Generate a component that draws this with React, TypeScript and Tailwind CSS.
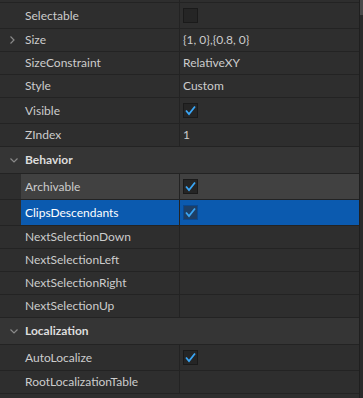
import type { ReactNode } from 'react'

type Row =
  | { kind: 'prop'; name: string; value?: string; check?: boolean; box?: boolean; expand?: boolean; state?: 'hover' | 'selected' }
  | { kind: 'head'; name: string }

const rows: Row[] = [
  { kind: 'prop', name: 'Selectable', box: true, check: false },
  { kind: 'prop', name: 'Size', value: '{1, 0},{0.8, 0}', expand: true },
  { kind: 'prop', name: 'SizeConstraint', value: 'RelativeXY' },
  { kind: 'prop', name: 'Style', value: 'Custom' },
  { kind: 'prop', name: 'Visible', box: true, check: true },
  { kind: 'prop', name: 'ZIndex', value: '1' },
  { kind: 'head', name: 'Behavior' },
  { kind: 'prop', name: 'Archivable', box: true, check: true, state: 'hover' },
  { kind: 'prop', name: 'ClipsDescendants', box: true, check: true, state: 'selected' },
  { kind: 'prop', name: 'NextSelectionDown' },
  { kind: 'prop', name: 'NextSelectionLeft' },
  { kind: 'prop', name: 'NextSelectionRight' },
  { kind: 'prop', name: 'NextSelectionUp' },
  { kind: 'head', name: 'Localization' },
  { kind: 'prop', name: 'AutoLocalize', box: true, check: true },
  { kind: 'prop', name: 'RootLocalizationTable' },
]

function Chevron({ down }: { down?: boolean }) {
  return (
    <svg width="10" height="10" viewBox="0 0 10 10" className="text-[#8a8a8a]">
      {down ? (
        <path d="M1.5 3.5 L5 7 L8.5 3.5" fill="none" stroke="currentColor" strokeWidth="1.2" />
      ) : (
        <path d="M3.5 1.5 L7 5 L3.5 8.5" fill="none" stroke="currentColor" strokeWidth="1.2" />
      )}
    </svg>
  )
}

function CheckBox({ checked, selected }: { checked?: boolean; selected?: boolean }) {
  return (
    <div
      className={`flex h-[15px] w-[15px] items-center justify-center border ${
        selected ? 'border-[#0a4890] bg-[#1d3f66]' : 'border-[#1a1a1a] bg-[#252525]'
      }`}
    >
      {checked && (
        <svg width="13" height="13" viewBox="0 0 13 13">
          <path d="M2 6.5 L5 10 L11 2.5" fill="none" stroke="#3aa6f5" strokeWidth="1.8" />
        </svg>
      )}
    </div>
  )
}

function Cell({ children, className = '' }: { children?: ReactNode; className?: string }) {
  return <div className={`flex items-center ${className}`}>{children}</div>
}

export default function App() {
  return (
    <div
      className="flex h-[398px] w-[363px] overflow-hidden bg-[#2e2e2e] text-[12px] text-[#cccccc]"
      style={{ fontFamily: 'Lato, "Open Sans", sans-serif' }}
    >
      <div className="flex flex-1 flex-col">
        <div className="flex h-[3px] shrink-0 border-b border-[#232323]">
          <div className="w-[180px] border-r border-[#232323]" />
        </div>
        {rows.map((r) =>
          r.kind === 'head' ? (
            <div
              key={r.name}
              className="flex h-[27px] shrink-0 items-center border-b border-[#232323] bg-[#353535]"
            >
              <div className="flex w-[25px] justify-center pl-[2px]">
                <Chevron down />
              </div>
              <span className="font-bold text-[#dddddd]">{r.name}</span>
            </div>
          ) : (
            <div
              key={r.name}
              className={`flex shrink-0 border-b border-[#232323] ${r.box ? 'h-[26px]' : 'h-[23px]'}`}
            >
              <div className="flex w-[21px] items-center justify-center pl-[2px]">
                {r.expand && <Chevron />}
              </div>
              <div
                className={`flex flex-1 ${
                  r.state === 'hover'
                    ? 'bg-[#414141]'
                    : r.state === 'selected'
                      ? 'bg-[#0b5aaf] text-white'
                      : ''
                }`}
              >
                <Cell className="w-[159px] border-r border-[#232323] pl-[4px]">{r.name}</Cell>
                <Cell className="flex-1 pl-[3px]">
                  {r.box ? <CheckBox checked={r.check} selected={r.state === 'selected'} /> : r.value}
                </Cell>
              </div>
            </div>
          ),
        )}
      </div>
      <div className="flex w-[4px] flex-col border-l border-[#1f1f1f] bg-[#2a2a2a]">
        <div className="h-[15px] bg-[#4a4a4a]" />
      </div>
    </div>
  )
}
